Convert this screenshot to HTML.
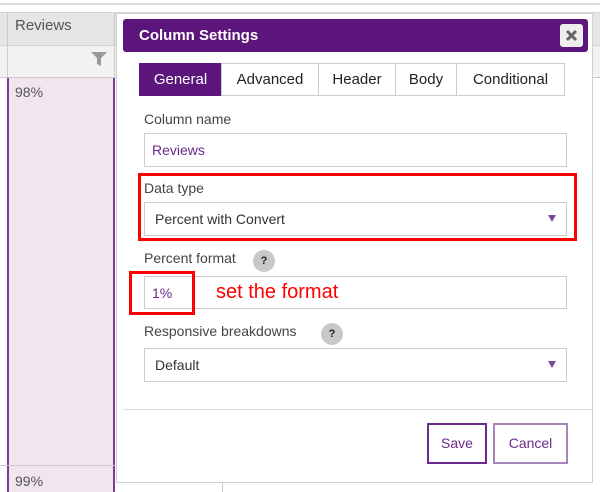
<!DOCTYPE html>
<html><head><style>
body{margin:0;width:600px;height:492px;position:relative;overflow:hidden;background:#fff;font-family:"Liberation Sans",sans-serif;}
.a{position:absolute;box-sizing:border-box;}
.lbl{position:absolute;font-size:14px;color:#444;}
.inp{position:absolute;box-sizing:border-box;border:1px solid #ccc;background:#fff;font-size:14px;}
.tab{position:absolute;top:63px;height:33px;box-sizing:border-box;border:1px solid #ccc;font-size:15px;color:#222;text-align:center;line-height:31px;}
.q{position:absolute;width:22px;height:22px;border-radius:11px;background:#c8c8c8;color:#222;font-size:11px;font-weight:bold;text-align:center;line-height:22px;}
.arr{position:absolute;right:10px;top:12px;width:0;height:0;border-left:4px solid transparent;border-right:4px solid transparent;border-top:7px solid #7a4a9a;}
</style></head><body>
<div class="a" style="left:0;top:3px;width:600px;height:2px;background:#ddd"></div>
<div class="a" style="left:0;top:12px;width:600px;height:33px;background:#e5e5e5;border-top:1px solid #d4d4d4"></div>
<div class="a" style="left:0;top:45px;width:600px;height:33px;background:#f2f2f2;border-top:1px solid #d4d4d4;border-bottom:1px solid #ccc"></div>
<div class="a" style="left:7px;top:12px;width:1px;height:66px;background:#ccc"></div>
<div class="a" style="left:114px;top:12px;width:1px;height:66px;background:#ccc"></div>
<div style="position:absolute;left:15px;top:17px;font-size:15px;color:#555">Reviews</div>
<svg class="a" style="left:91px;top:52px" width="16" height="14"><path d="M0 0H16L10 6V14L6 12V6Z" fill="#999"/></svg>
<div class="a" style="left:7px;top:78px;width:108px;height:414px;background:#f1e5f0;border-left:2px solid #7b3b96;border-right:2px solid #7b3b96"></div>
<div class="a" style="left:0;top:465px;width:222px;height:1px;background:#ccc"></div>
<div class="a" style="left:222px;top:465px;width:1px;height:27px;background:#ccc"></div>
<div style="position:absolute;left:15px;top:84px;font-size:14px;color:#555">98%</div>
<div style="position:absolute;left:15px;top:473px;font-size:14px;color:#555">99%</div>

<div class="a" style="left:116px;top:13px;width:477px;height:470px;background:#fff;border:1px solid #d0d0d0"></div>
<div class="a" style="left:123px;top:19px;width:465px;height:33px;background:#5c157a;border-radius:3px"></div>
<div style="position:absolute;left:139px;top:27px;font-size:15px;font-weight:bold;color:#fff">Column Settings</div>
<div class="a" style="left:560px;top:24px;width:23px;height:23px;background:#eee;border-radius:3px"></div>
<svg class="a" style="left:565px;top:29px" width="13" height="13"><path d="M2 2L11 11M11 2L2 11" stroke="#666" stroke-width="3"/></svg>

<div class="tab" style="left:139px;width:83px;background:#5c157a;border-color:#5c157a;color:#fff">General</div>
<div class="tab" style="left:221px;width:98px">Advanced</div>
<div class="tab" style="left:318px;width:78px">Header</div>
<div class="tab" style="left:395px;width:62px">Body</div>
<div class="tab" style="left:456px;width:109px">Conditional</div>

<div class="lbl" style="left:144px;top:111px">Column name</div>
<div class="inp" style="left:144px;top:133px;width:423px;height:34px;color:#6a2a8a;padding:8px 7px">Reviews</div>

<div class="a" style="left:138px;top:173px;width:439px;height:68px;border:3px solid #f00"></div>
<div class="lbl" style="left:144px;top:180px">Data type</div>
<div class="inp" style="left:144px;top:202px;width:423px;height:34px;color:#333;padding:8px 10px">Percent with Convert<div class="arr"></div></div>

<div class="lbl" style="left:144px;top:250px">Percent format</div>
<div class="q" style="left:253px;top:250px">?</div>
<div class="inp" style="left:144px;top:276px;width:423px;height:33px;color:#6a2a8a;padding:8px 7px">1%</div>
<div class="a" style="left:129px;top:271px;width:66px;height:44px;border:3px solid #f00"></div>
<div style="position:absolute;left:216px;top:281px;font-size:20px;color:#f00">set the format</div>

<div class="lbl" style="left:144px;top:323px">Responsive breakdowns</div>
<div class="q" style="left:321px;top:323px">?</div>
<div class="inp" style="left:144px;top:348px;width:423px;height:34px;color:#333;padding:8px 10px">Default<div class="arr"></div></div>

<div class="a" style="left:123px;top:409px;width:470px;height:1px;background:#ddd"></div>
<div class="a" style="left:427px;top:423px;width:60px;height:41px;border:2px solid #6a2a8a;color:#6a2a8a;font-size:14px;text-align:center;line-height:37px">Save</div>
<div class="a" style="left:493px;top:423px;width:75px;height:41px;border:2px solid #a685bb;color:#6a2a8a;font-size:14px;text-align:center;line-height:37px">Cancel</div>
</body></html>
